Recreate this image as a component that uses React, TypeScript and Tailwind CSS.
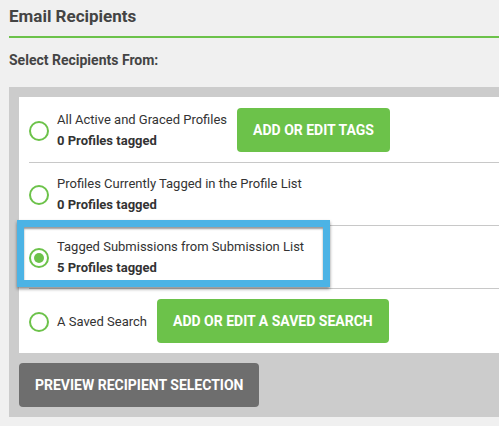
import React from "react";

function Radio({ checked }: { checked?: boolean }) {
  return (
    <span className="flex h-[20px] w-[20px] shrink-0 items-center justify-center rounded-full border-2 border-[#6cc24a] bg-white">
      {checked && <span className="h-[10px] w-[10px] rounded-full bg-[#6cc24a]" />}
    </span>
  );
}

function GreenButton({ children }: { children: React.ReactNode }) {
  return (
    <button className="ml-[10px] flex h-[44px] items-center rounded-[4px] bg-[#6cc24a] px-[16px] text-[14px] font-bold uppercase leading-none text-white">
      {children}
    </button>
  );
}

export default function App() {
  return (
    <div
      className="h-[426px] w-[499px] overflow-hidden bg-[#f0f0f0] pl-[9px] text-[#333]"
      style={{ fontFamily: "Roboto, 'Liberation Sans', sans-serif" }}
    >
      <h2 className="mt-[6px] border-b-2 border-[#6cc24a] pb-[10px] text-[17px] font-bold leading-[20px] text-[#444]">
        Email Recipients
      </h2>
      <div className="mt-[14px] text-[14px] font-bold leading-[16px] text-[#444]">Select Recipients From:</div>

      <div className="mt-[19px] bg-[#cccccc] pb-[10px] pl-[10px] pt-[10px]">
        <div className="bg-white pl-[10px]">
          {/* Row 1 */}
          <div className="flex h-[66px] items-center border-b border-[#c8c8c8]">
            <div className="mt-[3px]">
              <Radio />
            </div>
            <div className="ml-[8px] text-[13px] leading-[21px]">
              <div>All Active and Graced Profiles</div>
              <div className="font-bold">0 Profiles tagged</div>
            </div>
            <GreenButton>Add or Edit Tags</GreenButton>
          </div>

          {/* Row 2 */}
          <div className="flex h-[63px] items-center border-b border-[#c8c8c8]">
            <div className="mt-[2px]">
              <Radio />
            </div>
            <div className="ml-[8px] text-[13px] leading-[21px]">
              <div>Profiles Currently Tagged in the Profile List</div>
              <div className="font-bold">0 Profiles tagged</div>
            </div>
          </div>

          {/* Row 3 (highlighted) */}
          <div className="relative flex h-[63px] items-center border-b border-[#c8c8c8]">
            <div className="mt-[2px]">
              <Radio checked />
            </div>
            <div className="ml-[8px] text-[13px] leading-[21px]">
              <div>Tagged Submissions from Submission List</div>
              <div className="font-bold">5 Profiles tagged</div>
            </div>
            <div className="pointer-events-none absolute left-[-12px] top-[-6px] h-[67px] w-[313px] border-[7px] border-[#4cb3e5] shadow-[0_2px_3px_rgba(0,0,0,0.45),inset_0_2px_2px_rgba(0,0,0,0.4)]" />
          </div>

          {/* Row 4 */}
          <div className="flex h-[64px] items-center">
            <div className="mt-[1px]">
              <Radio />
            </div>
            <div className="ml-[8px] text-[13px] leading-[21px]">A Saved Search</div>
            <GreenButton>Add or Edit a Saved Search</GreenButton>
          </div>
        </div>

        <button className="mt-[10px] flex h-[44px] items-center rounded-[4px] bg-[#6e6e6e] px-[16px] text-[14px] font-bold uppercase leading-none text-white">
          Preview Recipient Selection
        </button>
      </div>
    </div>
  );
}
